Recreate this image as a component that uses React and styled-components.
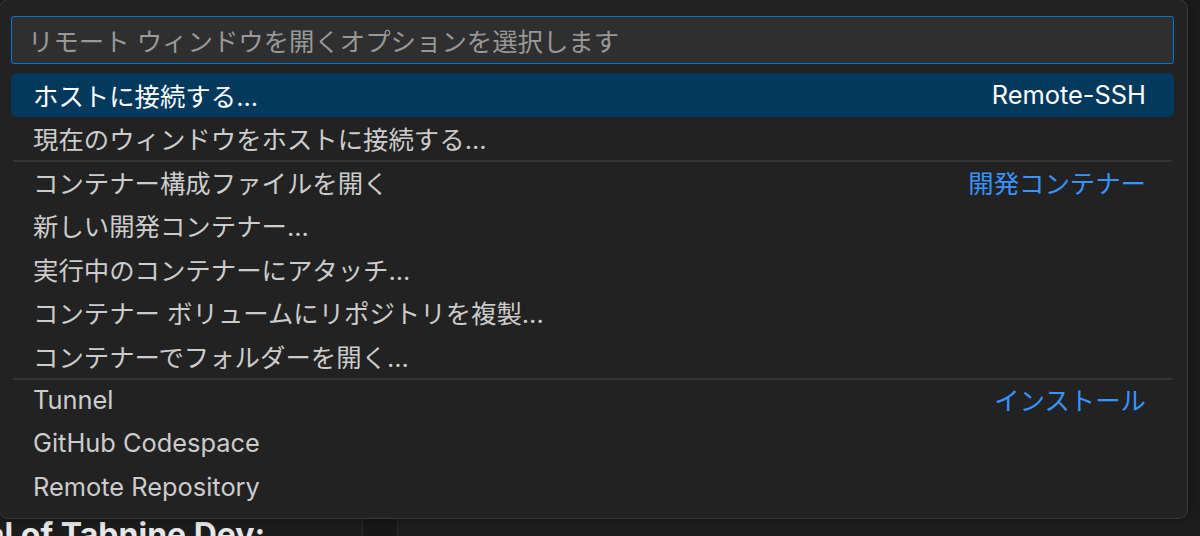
import React from "react";
import styled, { createGlobalStyle } from "styled-components";

const Global = createGlobalStyle`
  html, body { margin: 0; padding: 0; background: #1b1b1b; }
  body { font-family: "Inter", "Noto Sans CJK JP", sans-serif; }
  * { box-sizing: border-box; }
`;

const Page = styled.div`
  width: 1200px;
  height: 536px;
  overflow: hidden;
  display: flex;
  flex-direction: column;
  background: #1b1b1b;
`;

const Panel = styled.div`
  position: relative;
  z-index: 2;
  flex: none;
  width: 1189px;
  height: 520px;
  margin-left: -1px;
  margin-top: -1px;
  background: #222222;
  border: 1px solid #3a3a3a;
  border-radius: 9px;
  box-shadow: 0 0 8px rgba(0, 0, 0, 0.4);
  padding: 16px 13px 0 11px;
  display: flex;
  flex-direction: column;
  gap: 9px;
`;

const Input = styled.div`
  height: 48px;
  background: #2f2f2f;
  border: 1px solid #0078d4;
  border-radius: 3px;
  display: flex;
  align-items: center;
  padding-left: 16px;
  font-size: 25.4px;
  color: #989898;
  white-space: nowrap;
`;

const List = styled.div`
  display: flex;
  flex-direction: column;
`;

const Row = styled.div`
  position: relative;
  height: 43.5px;
  display: flex;
  align-items: center;
  justify-content: space-between;
  padding: 0 28px 0 22px;
  font-size: 25.4px;
  white-space: nowrap;
  border-radius: 6px;
  color: ${(p) => (p.$selected ? "#ffffff" : "#cccccc")};
  background: ${(p) => (p.$selected ? "#04395e" : "transparent")};
  ${(p) =>
    p.$separator &&
    `
    &::before {
      content: "";
      position: absolute;
      left: 2px;
      right: 2px;
      top: 0;
      height: 2px;
      background: #353535;
    }
  `}
`;

const Desc = styled.span`
  color: ${(p) => (p.$selected ? "#ffffff" : "#3794ff")};
`;

const Editor = styled.div`
  flex: 1;
  display: flex;
  background: #1c1c1c;
`;

const Heading = styled.div`
  width: 363px;
  overflow: hidden;
  white-space: nowrap;
  font-size: 32px;
  line-height: 30px;
  font-weight: 700;
  color: #e6e6e6;
  padding-top: 1px;
  border-right: 1px solid #2a2a2a;
`;

const HeadingText = styled.span`
  display: inline-block;
  margin-left: -14px;
`;

const Gutter = styled.div`
  width: 35px;
  background: #171717;
  border-right: 1px solid #2a2a2a;
`;

const Rest = styled.div`
  flex: 1;
  background: #1d1d1d;
`;

const items = [
  { label: "ホストに接続する...", desc: "Remote-SSH", selected: true },
  { label: "現在のウィンドウをホストに接続する..." },
  { label: "コンテナー構成ファイルを開く", desc: "開発コンテナー", separator: true },
  { label: "新しい開発コンテナー..." },
  { label: "実行中のコンテナーにアタッチ..." },
  { label: "コンテナー ボリュームにリポジトリを複製..." },
  { label: "コンテナーでフォルダーを開く..." },
  { label: "Tunnel", desc: "インストール", separator: true },
  { label: "GitHub Codespace" },
  { label: "Remote Repository" },
];

export default function App() {
  return (
    <>
      <Global />
      <Page>
        <Panel>
          <Input>リモート ウィンドウを開くオプションを選択します</Input>
          <List>
            {items.map((it) => (
              <Row key={it.label} $selected={it.selected} $separator={it.separator}>
                <span>{it.label}</span>
                {it.desc && <Desc $selected={it.selected}>{it.desc}</Desc>}
              </Row>
            ))}
          </List>
        </Panel>
        <Editor>
          <Heading>
            <HeadingText>al of Tabnine Dev:</HeadingText>
          </Heading>
          <Gutter />
          <Rest />
        </Editor>
      </Page>
    </>
  );
}
